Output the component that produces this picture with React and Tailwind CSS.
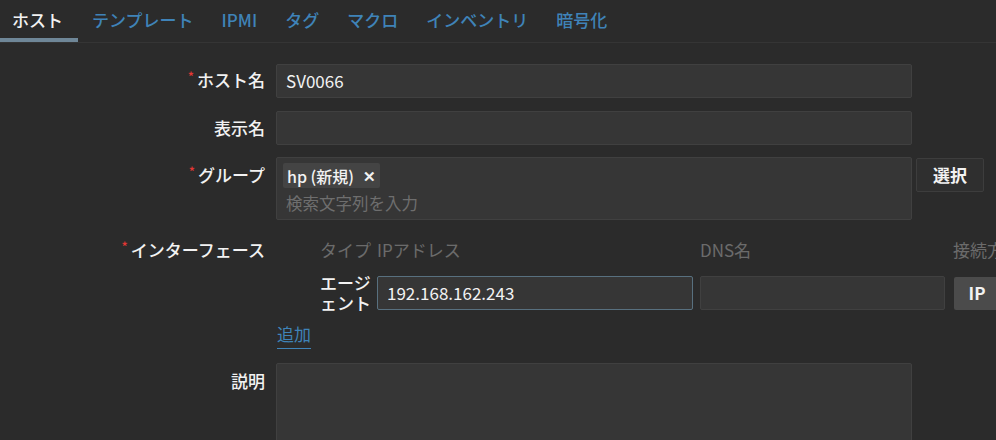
import React from 'react';

const tabs = ['ホスト', 'テンプレート', 'IPMI', 'タグ', 'マクロ', 'インベントリ', '暗号化'];

const Req = () => <span className="text-[#e33734] text-[13px] relative -top-[5px] mr-[3px]">*</span>;

const Label = ({ children, req, className = '' }) => (
  <div className={`w-[265px] shrink-0 text-right text-[#f2f2f2] font-medium ${className}`}>
    {req && <Req />}
    {children}
  </div>
);

const inputCls = 'bg-[#363636] border border-[#404040] rounded-[2px]';

const App = () => {
  return (
    <div className="w-[996px] h-[440px] overflow-hidden bg-[#2b2b2b] font-['Noto_Sans_CJK_JP','Noto_Sans',sans-serif] text-[17px] leading-[20px]">
      <nav className="flex h-[43px] border-b border-[#353535]">
        {tabs.map((t, i) => (
          <div
            key={t}
            className={`flex items-center px-[14px] font-medium ${
              i === 0 ? 'text-[#f2f2f2] border-b-[4px] border-[#6f8798] pt-[1px] pl-[12px] pr-[15px]' : 'text-[#3f83b8] pb-[3px]'
            }`}
          >
            {t}
          </div>
        ))}
      </nav>

      <div className="pt-[21px]">
        {/* host name */}
        <div className="flex items-center">
          <Label req>ホスト名</Label>
          <div className={`ml-[11px] w-[636px] h-[34px] flex items-center px-[9px] text-[#f2f2f2] ${inputCls}`}>SV0066</div>
        </div>

        {/* visible name */}
        <div className="flex items-center mt-[13px]">
          <Label>表示名</Label>
          <div className={`ml-[11px] w-[636px] h-[34px] ${inputCls}`} />
        </div>

        {/* groups */}
        <div className="flex items-start mt-[12px]">
          <Label req className="pt-[8px]">グループ</Label>
          <div className={`ml-[11px] w-[636px] h-[63px] px-[6px] pt-[5px] ${inputCls}`}>
            <div className="inline-flex items-center h-[25px] bg-[#444444] rounded-[2px] px-[4px] gap-[9px] text-[#f2f2f2] font-medium text-[16px]">
              <span>hp (新規)</span>
              <span className="text-[15px] font-bold">✕</span>
            </div>
            <div className="mt-[5px] px-[3px] text-[#6e6e6e] text-[16.5px]">検索文字列を入力</div>
          </div>
          <button className="ml-[4px] mt-[1px] w-[68px] h-[34px] bg-[#2f2f2f] border border-[#3d3d3d] rounded-[2px] text-[#f2f2f2] font-bold">
            選択
          </button>
        </div>

        {/* interfaces */}
        <div className="flex items-start mt-[20px]">
          <Label req>インターフェース</Label>
          <div className="ml-[11px] pl-[44px] shrink-0">
            <div className="flex text-[#6b6b6b] h-[20px]">
              <div className="w-[57px] shrink-0">タイプ</div>
              <div className="w-[323px] shrink-0">IPアドレス</div>
              <div className="w-[253px] shrink-0">DNS名</div>
              <div className="w-[120px] shrink-0 whitespace-nowrap">接続方法</div>
            </div>
            <div className="flex items-center mt-[13px]">
              <div className="w-[57px] shrink-0 text-[#f2f2f2] font-medium">
                <div className="w-[54px]">エージェント</div>
              </div>
              <div className="w-[316px] h-[34px] shrink-0 flex items-center px-[9px] text-[#f2f2f2] bg-[#363636] border border-[#58707f] rounded-[2px]">
                192.168.162.243
              </div>
              <div className={`ml-[7px] w-[245px] h-[34px] shrink-0 ${inputCls}`} />
              <div className="ml-[9px] flex shrink-0 h-[33px]">
                <div className="w-[46px] flex items-center justify-center bg-[#4b4b4b] text-[#f2f2f2] font-bold rounded-l-[2px]">IP</div>
                <div className="w-[52px] flex items-center justify-center bg-[#363636] text-[#f2f2f2]">DNS</div>
              </div>
            </div>
          </div>
        </div>

        {/* add */}
        <div className="flex mt-[11px]">
          <div className="w-[265px] shrink-0" />
          <div className="ml-[12px]">
            <span className="text-[#3f83b8] border-b border-[#3f83b8] pb-[2px]">追加</span>
          </div>
        </div>

        {/* description */}
        <div className="flex items-start mt-[19px]">
          <Label className="pt-[8px]">説明</Label>
          <div className={`ml-[11px] w-[636px] h-[110px] ${inputCls}`} />
        </div>
      </div>
    </div>
  );
};

export default App;
